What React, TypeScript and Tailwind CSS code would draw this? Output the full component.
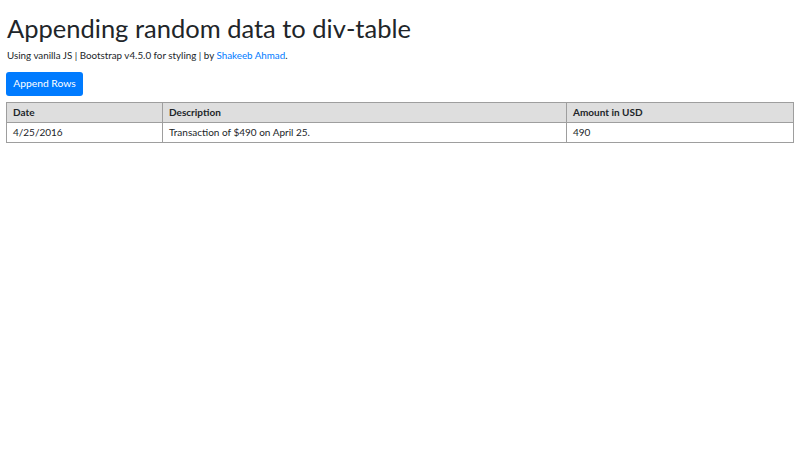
import React from 'react';

const rows = [{ date: '4/25/2016', desc: 'Transaction of $490 on April 25.', amount: '490' }];

export default function App() {
  return (
    <div className="min-h-[450px] bg-white px-[6px] pt-[12px] text-[#212529]" style={{ fontFamily: 'Lato, "Noto Sans", sans-serif' }}>
      <h1 className="text-[25.5px] leading-[32px] font-normal ml-[1px]">Appending random data to div-table</h1>
      <p className="text-[9.8px] leading-[16px] mt-[3px] ml-[1px]">
        Using vanilla JS | Bootstrap v4.5.0 for styling | by <a className="text-[#007bff]">Shakeeb Ahmad</a>.
      </p>
      <button className="mt-[9px] h-[24px] w-[77px] rounded-[3px] bg-[#007bff] text-white text-[10.3px]">Append Rows</button>
      <div className="mt-[6px] w-[788px] border border-[#9e9e9e] text-[10px]">
        <div className="grid grid-cols-[156px_404px_1fr] bg-[#dedede] font-bold h-[20px] border-b border-[#9e9e9e]">
          <div className="px-[6px] leading-[19px] border-r border-[#9e9e9e]">Date</div>
          <div className="px-[6px] leading-[19px] border-r border-[#9e9e9e]">Description</div>
          <div className="px-[6px] leading-[19px]">Amount in USD</div>
        </div>
        {rows.map((r, i) => (
          <div key={i} className="grid grid-cols-[156px_404px_1fr] h-[19px]">
            <div className="px-[6px] leading-[19px] border-r border-[#9e9e9e]">{r.date}</div>
            <div className="px-[6px] leading-[19px] border-r border-[#9e9e9e]">{r.desc}</div>
            <div className="px-[6px] leading-[19px]">{r.amount}</div>
          </div>
        ))}
      </div>
    </div>
  );
}
